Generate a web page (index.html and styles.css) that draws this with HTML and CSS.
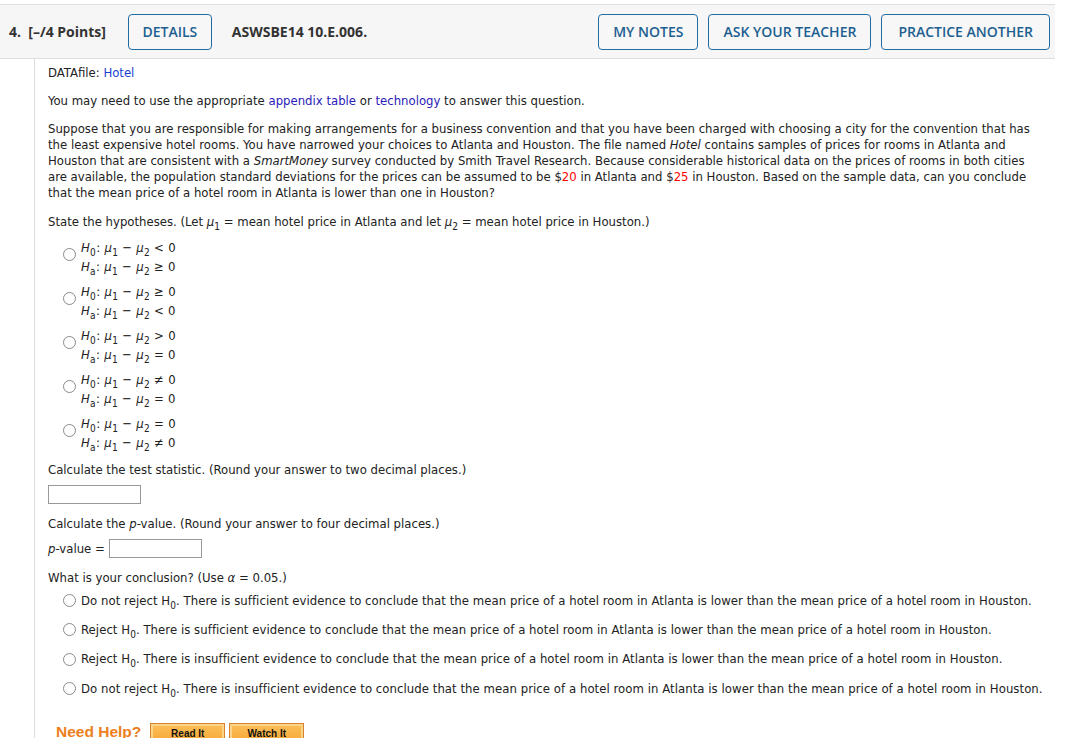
FILE: index.html
```html
<!DOCTYPE html>
<html>
<head>
<meta charset="utf-8">
<link rel="stylesheet" href="styles.css">
</head>
<body>
<div class="header">
  <span class="qnum">4.&nbsp; [–/4 Points]</span>
  <span class="btn">DETAILS</span>
  <span class="qid">ASWSBE14 10.E.006.</span>
  <span class="spacer"></span>
  <span class="btn">MY NOTES</span>
  <span class="btn">ASK YOUR TEACHER</span>
  <span class="btn">PRACTICE ANOTHER</span>
</div>
<div class="content">
  <p class="line first">DATAfile: <a class="lnk">Hotel</a></p>
  <p class="line">You may need to use the appropriate <a class="lnk2">appendix table</a> or <a class="lnk2">technology</a> to answer this question.</p>
  <p class="para">Suppose that you are responsible for making arrangements for a business convention and that you have been charged with choosing a city for the convention that has<br>the least expensive hotel rooms. You have narrowed your choices to Atlanta and Houston. The file named <i>Hotel</i> contains samples of prices for rooms in Atlanta and<br>Houston that are consistent with a <i>SmartMoney</i> survey conducted by Smith Travel Research. Because considerable historical data on the prices of rooms in both cities<br>are available, the population standard deviations for the prices can be assumed to be $<span class="red">20</span> in Atlanta and $<span class="red">25</span> in Houston. Based on the sample data, can you conclude<br>that the mean price of a hotel room in Atlanta is lower than one in Houston?</p>
  <p class="line state">State the hypotheses. (Let <i class="mu">μ</i><sub>1</sub> = mean hotel price in Atlanta and let <i class="mu">μ</i><sub>2</sub> = mean hotel price in Houston.)</p>

  <div class="hyps">
    <div class="hyp"><span class="radio"></span><div class="hl">
      <div><i>H</i><sub>0</sub>: <i class="mu">μ</i><sub>1</sub> − <i class="mu">μ</i><sub>2</sub> &lt; 0</div>
      <div><i>H</i><sub>a</sub>: <i class="mu">μ</i><sub>1</sub> − <i class="mu">μ</i><sub>2</sub> ≥ 0</div>
    </div></div>
    <div class="hyp"><span class="radio"></span><div class="hl">
      <div><i>H</i><sub>0</sub>: <i class="mu">μ</i><sub>1</sub> − <i class="mu">μ</i><sub>2</sub> ≥ 0</div>
      <div><i>H</i><sub>a</sub>: <i class="mu">μ</i><sub>1</sub> − <i class="mu">μ</i><sub>2</sub> &lt; 0</div>
    </div></div>
    <div class="hyp"><span class="radio"></span><div class="hl">
      <div><i>H</i><sub>0</sub>: <i class="mu">μ</i><sub>1</sub> − <i class="mu">μ</i><sub>2</sub> &gt; 0</div>
      <div><i>H</i><sub>a</sub>: <i class="mu">μ</i><sub>1</sub> − <i class="mu">μ</i><sub>2</sub> = 0</div>
    </div></div>
    <div class="hyp"><span class="radio"></span><div class="hl">
      <div><i>H</i><sub>0</sub>: <i class="mu">μ</i><sub>1</sub> − <i class="mu">μ</i><sub>2</sub> ≠ 0</div>
      <div><i>H</i><sub>a</sub>: <i class="mu">μ</i><sub>1</sub> − <i class="mu">μ</i><sub>2</sub> = 0</div>
    </div></div>
    <div class="hyp"><span class="radio"></span><div class="hl">
      <div><i>H</i><sub>0</sub>: <i class="mu">μ</i><sub>1</sub> − <i class="mu">μ</i><sub>2</sub> = 0</div>
      <div><i>H</i><sub>a</sub>: <i class="mu">μ</i><sub>1</sub> − <i class="mu">μ</i><sub>2</sub> ≠ 0</div>
    </div></div>
  </div>

  <p class="line calc">Calculate the test statistic. (Round your answer to two decimal places.)</p>
  <div class="box"></div>
  <p class="line calc2">Calculate the <i>p</i>-value. (Round your answer to four decimal places.)</p>
  <div class="pline"><i>p</i>-value =&nbsp;<span class="box inl"></span></div>
  <p class="line concl">What is your conclusion? (Use <i class="mu">α</i> = 0.05.)</p>
  <div class="opts">
    <div class="opt"><span class="radio"></span><span>Do not reject H<sub>0</sub>. There is sufficient evidence to conclude that the mean price of a hotel room in Atlanta is lower than the mean price of a hotel room in Houston.</span></div>
    <div class="opt"><span class="radio"></span><span>Reject H<sub>0</sub>. There is sufficient evidence to conclude that the mean price of a hotel room in Atlanta is lower than the mean price of a hotel room in Houston.</span></div>
    <div class="opt"><span class="radio"></span><span>Reject H<sub>0</sub>. There is insufficient evidence to conclude that the mean price of a hotel room in Atlanta is lower than the mean price of a hotel room in Houston.</span></div>
    <div class="opt"><span class="radio"></span><span>Do not reject H<sub>0</sub>. There is insufficient evidence to conclude that the mean price of a hotel room in Atlanta is lower than the mean price of a hotel room in Houston.</span></div>
  </div>
  <div class="help">
    <span class="needhelp">Need Help?</span>
    <span class="hbtn">Read It</span>
    <span class="hbtn">Watch It</span>
  </div>
</div>
</body>
</html>
```
FILE: styles.css
```css
html, body { margin: 0; padding: 0; background: #fff; }
body {
  font-family: "DejaVu Sans", Verdana, sans-serif;
  font-stretch: condensed;
  font-size: 13px;
  color: #222;
  overflow: hidden;
  height: 738px;
}
.header {
  margin-top: 4px;
  width: 1055px;
  height: 53px;
  box-sizing: content-box;
  border-top: 1px solid #dedede;
  border-bottom: 1px solid #dedede;
  background: #f6f6f6;
  display: flex;
  align-items: center;
  font-family: "Open Sans", sans-serif;
  font-stretch: normal;
  font-size: 14px;
}
.qnum { font-weight: 700; color: #333; margin-left: 9px; margin-right: 22px; }
.qid { font-weight: 700; color: #333; margin-left: 20px; }
.spacer { flex: 1; }
.btn {
  display: inline-flex;
  align-items: center;
  height: 34px;
  padding: 0 14px;
  border: 1px solid #1f6ca3;
  border-radius: 4px;
  color: #1d5f91;
  font-weight: 600;
  background: #f7f7f7;
  margin-left: 10px;
}
.header > .btn:nth-child(2) { margin-left: 0; padding: 0 13.5px; }
.header > .btn:last-child { margin-right: 5px; padding: 0 16px; }
.content {
  margin-left: 34px;
  border-left: 1px solid #dddddd;
  padding-left: 13px;
  height: 700px;
}
p { margin: 0; }
.line { line-height: 16px; }
.first { padding-top: 6px; }
.line + .line { margin-top: 12px; }
.lnk { color: #1a3fcf; }
.lnk2 { color: #2a1bb8; }
.red { color: #f00; }
.para { margin-top: 12px; line-height: 16px; white-space: nowrap; }
.state { margin-top: 13px !important; }
i.mu { font-family: "DejaVu Sans", serif; font-style: italic; }
sub { font-size: 10px; vertical-align: -4px; line-height: 0; }
.hyps { margin-top: 8px; }
.hyp { display: flex; align-items: center; height: 38px; margin-bottom: 6px; margin-left: 15px; }
.hyp .radio { margin-top: -5px; }
.hl { line-height: 19px; letter-spacing: 0.3px; }
.radio {
  display: inline-block;
  width: 11px; height: 11px;
  border: 1px solid #8a8a8a;
  border-radius: 50%;
  background: #fff;
  margin-right: 5px;
  flex: none;
}
.calc { margin-top: 10px; }
.box { width: 91px; height: 17px; border: 1px solid #999; margin-top: 7px; background: #fff; }
.box.inl { display: inline-block; margin-top: 0; vertical-align: middle; }
.calc2 { margin-top: 12px; }
.pline { margin-top: 7px; line-height: 18px; display: flex; align-items: center; }
.concl { margin-top: 12px; }
.opts { margin-top: 0; margin-left: 15px; letter-spacing: 0.05px; }
.opt { display: flex; align-items: center; height: 29.3px; line-height: 16px; }
.help { margin-top: 20px; display: flex; align-items: flex-start; }
.needhelp {
  font-family: "Liberation Sans", Arial, sans-serif;
  font-stretch: normal;
  font-weight: 700; font-size: 15.5px; color: #ec7e1d;
  margin-left: 8px; margin-right: 9px; margin-top: 0;
}
.hbtn {
  font-family: "Liberation Sans", Arial, sans-serif;
  font-stretch: normal;
  display: inline-block;
  width: 73px; height: 20px;
  border: 1px solid #d8822b;
  background: linear-gradient(#fbc05a, #f7a531);
  box-shadow: inset 0 0 0 2px #f9d48a;
  font-size: 10px; font-weight: 700; color: #111;
  text-align: center; line-height: 20px;
  margin-right: 4px;
}
```
